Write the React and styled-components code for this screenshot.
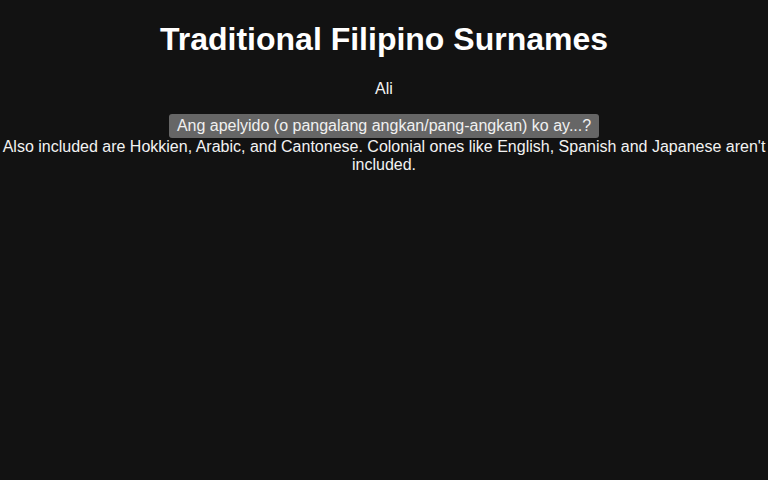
import React from 'react'
import styled, { createGlobalStyle } from 'styled-components'

const GlobalStyle = createGlobalStyle`
  html, body {
    margin: 0;
    padding: 0;
    background: #121212;
  }
  body {
    font-family: "Liberation Sans", Arial, sans-serif;
    color: #ffffff;
  }
`

const Page = styled.div`
  text-align: center;
  min-height: 480px;
`

const Title = styled.h1`
  font-size: 32px;
  font-weight: bold;
  margin: 21px 0 22px;
  line-height: 37px;
`

const Name = styled.p`
  font-size: 16px;
  line-height: 18px;
  margin: 16px 0;
  color: #f2f2f2;
`

const AskButton = styled.button`
  font-family: "Liberation Sans", Arial, sans-serif;
  font-size: 16px;
  line-height: 18px;
  padding: 3px 8px;
  background: #666666;
  color: #f0f0f0;
  border: none;
  border-radius: 3px;
  cursor: pointer;
`

const Note = styled.div`
  font-size: 16px;
  line-height: 18px;
  color: #f2f2f2;
`

const App = () => {
  return (
    <Page>
      <GlobalStyle />
      <Title>Traditional Filipino Surnames</Title>
      <Name>Ali</Name>
      <AskButton>Ang apelyido (o pangalang angkan/pang-angkan) ko ay...?</AskButton>
      <Note>
        Also included are Hokkien, Arabic, and Cantonese. Colonial ones like English, Spanish and Japanese aren't included.
      </Note>
    </Page>
  )
}

export default App
